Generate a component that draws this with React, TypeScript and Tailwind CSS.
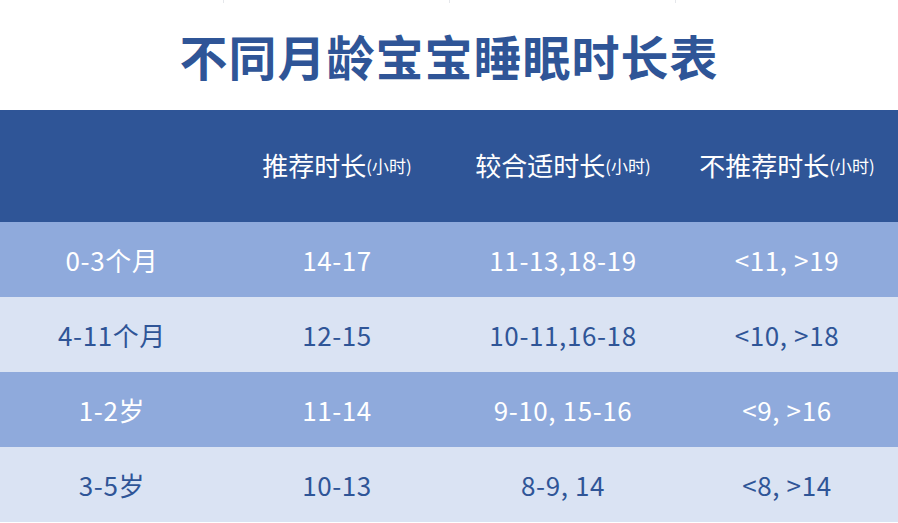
import React from 'react';

const rows = [
  { age: '0-3个月', rec: '14-17', ok: '11-13,18-19', no: '<11, >19' },
  { age: '4-11个月', rec: '12-15', ok: '10-11,16-18', no: '<10, >18' },
  { age: '1-2岁', rec: '11-14', ok: '9-10, 15-16', no: '<9, >16' },
  { age: '3-5岁', rec: '10-13', ok: '8-9, 14', no: '<8, >14' },
];

const HeadCell = ({ label }: { label: string }) => (
  <div className="flex items-center justify-center text-white">
    <span className="text-[26px] leading-none">{label}</span>
    <span className="text-[17px] leading-none">(小时)</span>
  </div>
);

export default function App() {
  return (
    <div
      className="w-[898px] h-[523px] bg-white flex flex-col overflow-hidden"
      style={{ fontFamily: '"Noto Sans CJK SC", "Noto Sans", sans-serif' }}
    >
      <div className="grid grid-cols-[224px_226px_226px_222px] h-[3px]">
        <div className="border-r border-gray-200" />
        <div className="border-r border-gray-200" />
        <div className="border-r border-gray-200" />
        <div />
      </div>
      <div className="h-[107px] flex items-center justify-center pb-[4px]">
        <h1 className="text-[48px] font-bold text-[#2f5597] tracking-[1px] leading-none">
          不同月龄宝宝睡眠时长表
        </h1>
      </div>
      <div className="grid grid-cols-[224px_226px_226px_222px] h-[112px] bg-[#2f5597] pb-[2px]">
        <div />
        <HeadCell label="推荐时长" />
        <HeadCell label="较合适时长" />
        <HeadCell label="不推荐时长" />
      </div>
      {rows.map((r, i) => {
        const dark = i % 2 === 0;
        return (
          <div
            key={r.age}
            className={`grid grid-cols-[224px_226px_226px_222px] h-[75px] text-[26px] tracking-[0.6px] ${
              dark ? 'bg-[#8faadc] text-white' : 'bg-[#dae3f3] text-[#2f5597]'
            }`}
          >
            <div className="flex items-center justify-center">{r.age}</div>
            <div className="flex items-center justify-center">{r.rec}</div>
            <div className="flex items-center justify-center">{r.ok}</div>
            <div className="flex items-center justify-center">{r.no}</div>
          </div>
        );
      })}
    </div>
  );
}
